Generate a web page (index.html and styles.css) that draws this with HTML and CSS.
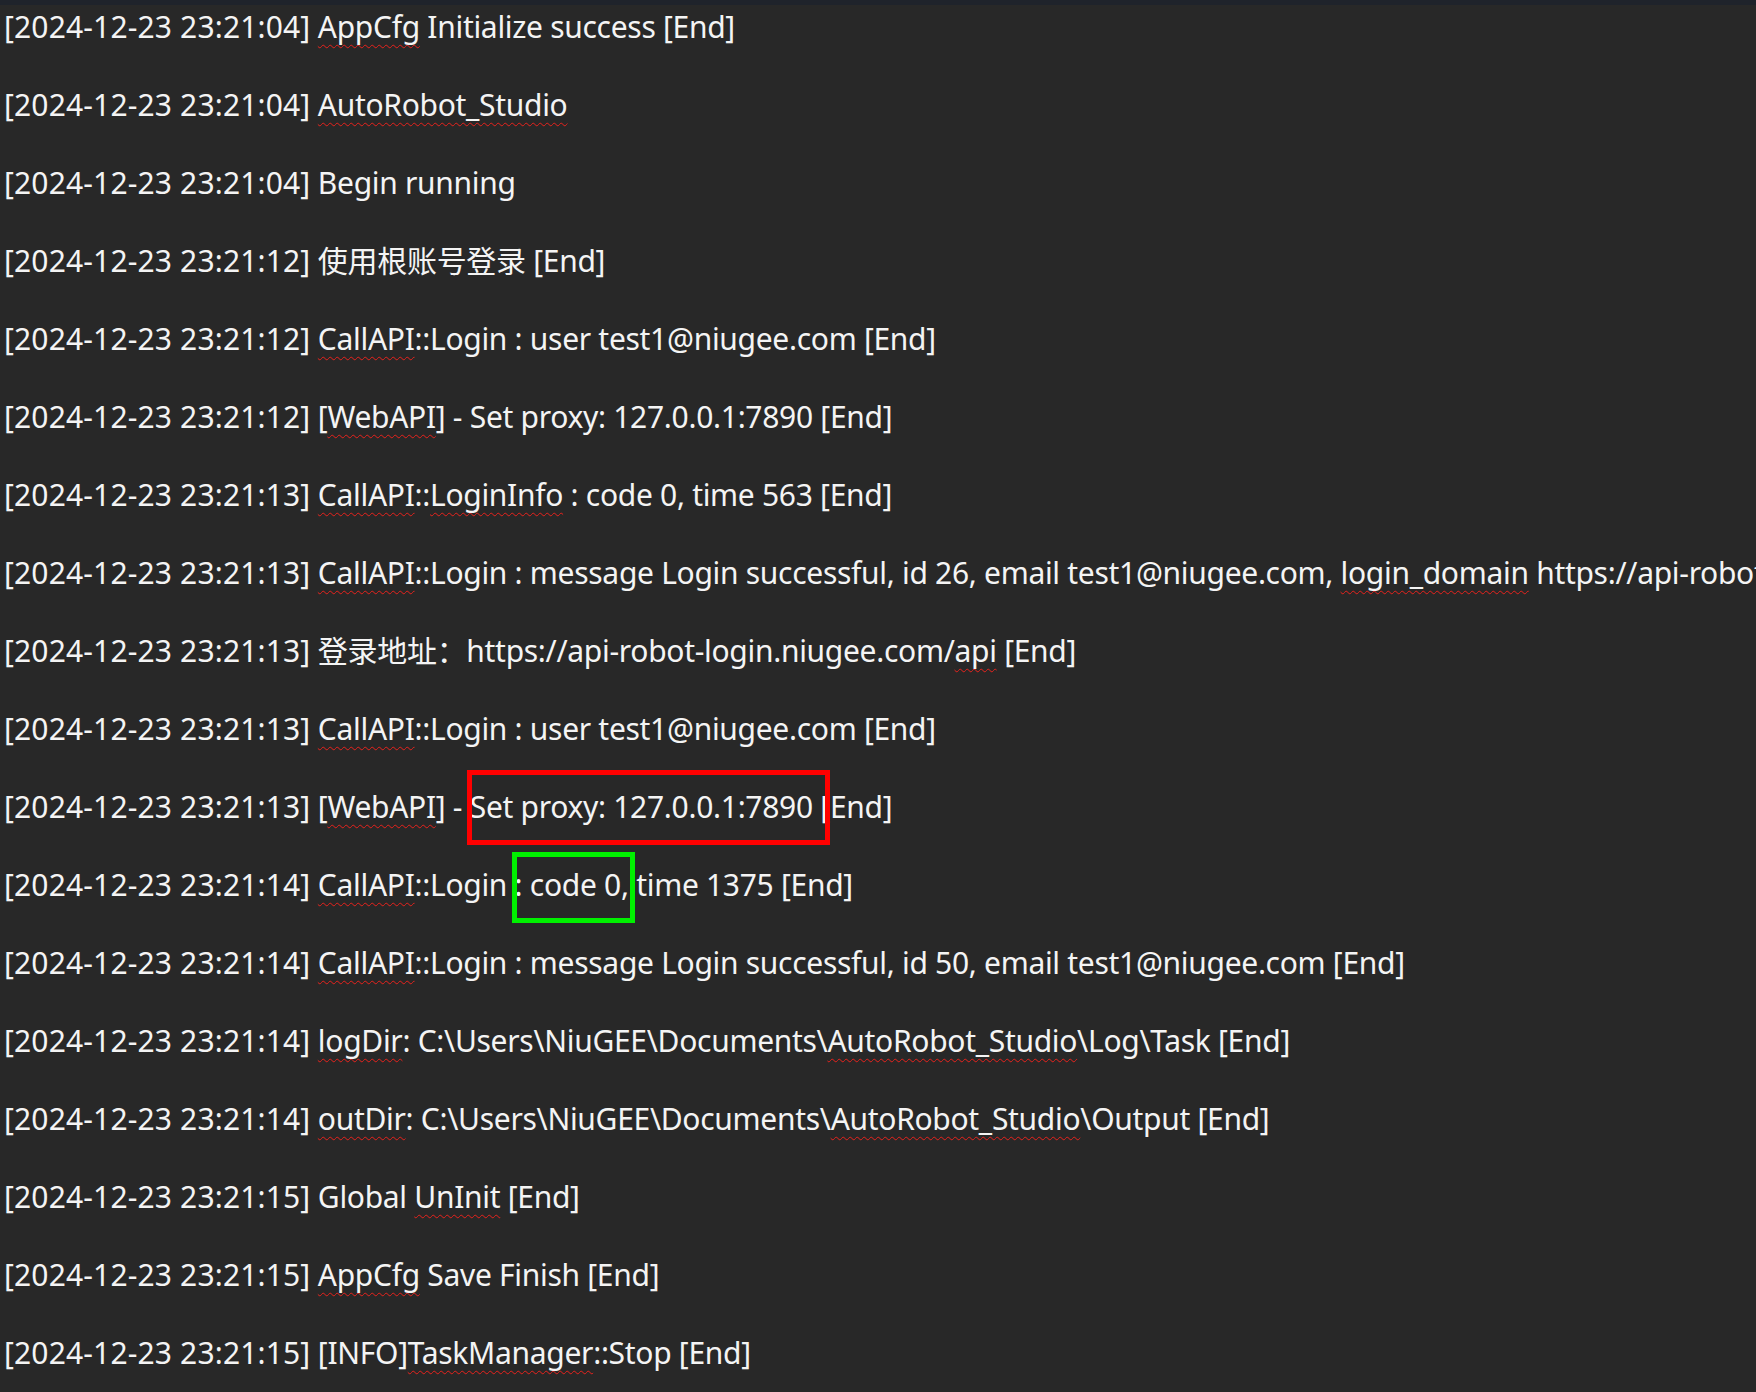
FILE: index.html
```html
<!DOCTYPE html>
<html lang="zh-CN">
<head>
    <meta charset="UTF-8">
    <title>AutoRobot_Studio Log</title>
    <link rel="stylesheet" href="styles.css">
</head>
<body>
    <div class="topbar"></div>

    <!-- log output -->
    <div class="log">
        <div class="line"><span class="ts">[2024-12-23 23:21:04]</span> <span class="sp">AppCfg</span> Initialize success [End]</div>
        <div class="line"><span class="ts">[2024-12-23 23:21:04]</span> <span class="sp">AutoRobot_Studio</span></div>
        <div class="line"><span class="ts">[2024-12-23 23:21:04]</span> Begin running</div>
        <div class="line"><span class="ts">[2024-12-23 23:21:12]</span> 使用根账号登录 [End]</div>
        <div class="line"><span class="ts">[2024-12-23 23:21:12]</span> <span class="sp">CallAPI</span>::Login : user test1@niugee.com [End]</div>
        <div class="line"><span class="ts">[2024-12-23 23:21:12]</span> [<span class="sp">WebAPI</span>] - Set proxy: 127.0.0.1:7890 [End]</div>
        <div class="line"><span class="ts">[2024-12-23 23:21:13]</span> <span class="sp">CallAPI</span>::<span class="sp">LoginInfo</span> : code 0, time 563 [End]</div>
        <div class="line"><span class="ts">[2024-12-23 23:21:13]</span> <span class="sp">CallAPI</span>::Login : message Login successful, id 26, email test1@niugee.com, <span class="sp">login_domain</span> https://api-robot-login.niugee.com/api [End]</div>
        <div class="line"><span class="ts">[2024-12-23 23:21:13]</span> 登录地址：https://api-robot-login.niugee.com/<span class="sp">api</span> [End]</div>
        <div class="line"><span class="ts">[2024-12-23 23:21:13]</span> <span class="sp">CallAPI</span>::Login : user test1@niugee.com [End]</div>
        <div class="line"><span class="ts">[2024-12-23 23:21:13]</span> [<span class="sp">WebAPI</span>] - <span class="mark red">Set proxy: 127.0.0.1:7890 </span>[End]</div>
        <div class="line"><span class="ts">[2024-12-23 23:21:14]</span> <span class="sp">CallAPI</span>::Login <span class="mark green">: code 0,</span> time 1375 [End]</div>
        <div class="line"><span class="ts">[2024-12-23 23:21:14]</span> <span class="sp">CallAPI</span>::Login : message Login successful, id 50, email test1@niugee.com [End]</div>
        <div class="line"><span class="ts">[2024-12-23 23:21:14]</span> <span class="sp">logDir</span>: C:\Users\NiuGEE\Documents\<span class="sp">AutoRobot_Studio</span>\Log\Task [End]</div>
        <div class="line"><span class="ts">[2024-12-23 23:21:14]</span> <span class="sp">outDir</span>: C:\Users\NiuGEE\Documents\<span class="sp">AutoRobot_Studio</span>\Output [End]</div>
        <div class="line"><span class="ts">[2024-12-23 23:21:15]</span> Global <span class="sp">UnInit</span> [End]</div>
        <div class="line"><span class="ts">[2024-12-23 23:21:15]</span> <span class="sp">AppCfg</span> Save Finish [End]</div>
        <div class="line"><span class="ts">[2024-12-23 23:21:15]</span> [INFO]<span class="sp">TaskManager</span>::Stop [End]</div>
    </div>
</body>
</html>
```

FILE: styles.css
```css
html, body {
    margin: 0;
    padding: 0;
    height: 100%;
    background: #282828;
    overflow: hidden;
}
body {
    font-family: "Noto Sans", "Noto Sans CJK SC", sans-serif;
    font-size: 30px;
    color: #f4f4f4;
}
.topbar {
    height: 5px;
    background: #1f232b;
}
.log {
    display: flex;
    flex-direction: column;
    padding: 2px 0 0 4px;
}
.line {
    line-height: 39px;
    height: 78px;
    white-space: nowrap;
    letter-spacing: -0.3px;
}
.ts {
    letter-spacing: 0.15px;
}
.sp {
    text-decoration: underline wavy #e8221c;
    text-decoration-thickness: 1px;
    text-underline-offset: 6px;
    text-decoration-skip-ink: none;
}
.mark {
    position: relative;
}
.mark::after {
    content: "";
    position: absolute;
    pointer-events: none;
}
.red::after {
    left: -3px;
    right: -10px;
    top: -16px;
    bottom: -18px;
    border: 5px solid #ff0000;
}
.green::after {
    left: -3px;
    right: -6px;
    top: -12px;
    bottom: -18px;
    border: 5px solid #00f000;
}
```
